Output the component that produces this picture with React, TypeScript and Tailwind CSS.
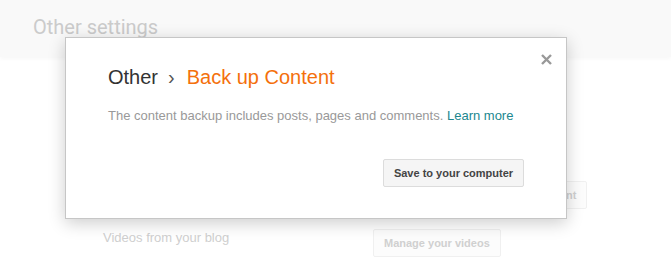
import React from 'react';

const arial = { fontFamily: '"Liberation Sans", Arial, sans-serif' };

function GhostButton({ children }: { children: React.ReactNode }) {
  return (
    <div className="h-[28px] px-[10px] flex items-center rounded-[2px] border border-[#f0f0f0] bg-[#fcfcfc] text-[11px] font-bold text-[#d0d0d0]">
      {children}
    </div>
  );
}

export default function App() {
  return (
    <div className="relative w-[671px] h-[274px] overflow-hidden bg-white" style={arial}>
      {/* Faded page behind the dialog */}
      <div
        className="h-[57px] bg-[#f9f9f9] px-[33px] pt-[14px] text-[20px] leading-[26px] text-[#cbcbcb] shadow-[0_2px_4px_rgba(0,0,0,0.03)]"
        style={{ fontFamily: 'Roboto, "Liberation Sans", sans-serif' }}
      >
        Other settings
      </div>

      <div className="pl-[103px] pt-[124px] flex flex-col gap-[20px]">
        <div className="flex items-start">
          <div className="w-[270px] pt-[1px] text-[13px] leading-[16px] text-[#d4d4d4]">Blog tools</div>
          <div className="flex gap-[6px]">
            <GhostButton>Import content</GhostButton>
            <GhostButton>Back up Content</GhostButton>
          </div>
        </div>
        <div className="flex items-start">
          <div className="w-[270px] pt-[1px] text-[13px] leading-[16px] text-[#cfcfcf]">Videos from your blog</div>
          <GhostButton>Manage your videos</GhostButton>
        </div>
      </div>

      {/* Dialog */}
      <div className="absolute left-[65px] top-[37px] w-[502px] h-[182px] bg-white border border-[#c6c6c6] shadow-[0_4px_16px_rgba(0,0,0,0.2)] px-[42px] pt-[28px]">
        <svg className="absolute left-[475px] top-[16px]" width="11" height="11" viewBox="0 0 11 11">
          <path d="M1 1L10 10M10 1L1 10" stroke="#999" strokeWidth="2.4" />
        </svg>

        <div className="text-[20px] leading-[23px] flex items-baseline">
          <span className="text-[#333]">Other</span>
          <span className="ml-[10px] mr-[12px] text-[#555]">›</span>
          <span className="text-[#f4700c]">Back up Content</span>
        </div>

        <p className="mt-[19px] text-[13px] leading-[16px] text-[#999]">
          The content backup includes posts, pages and comments.{' '}
          <span className="text-[#21878f]">Learn more</span>
        </p>

        <div className="mt-[35px] flex justify-end">
          <button className="h-[28px] w-[141px] rounded-[2px] border border-[#dcdcdc] bg-[#f5f5f5] text-[11px] font-bold text-[#444]">
            Save to your computer
          </button>
        </div>
      </div>
    </div>
  );
}
